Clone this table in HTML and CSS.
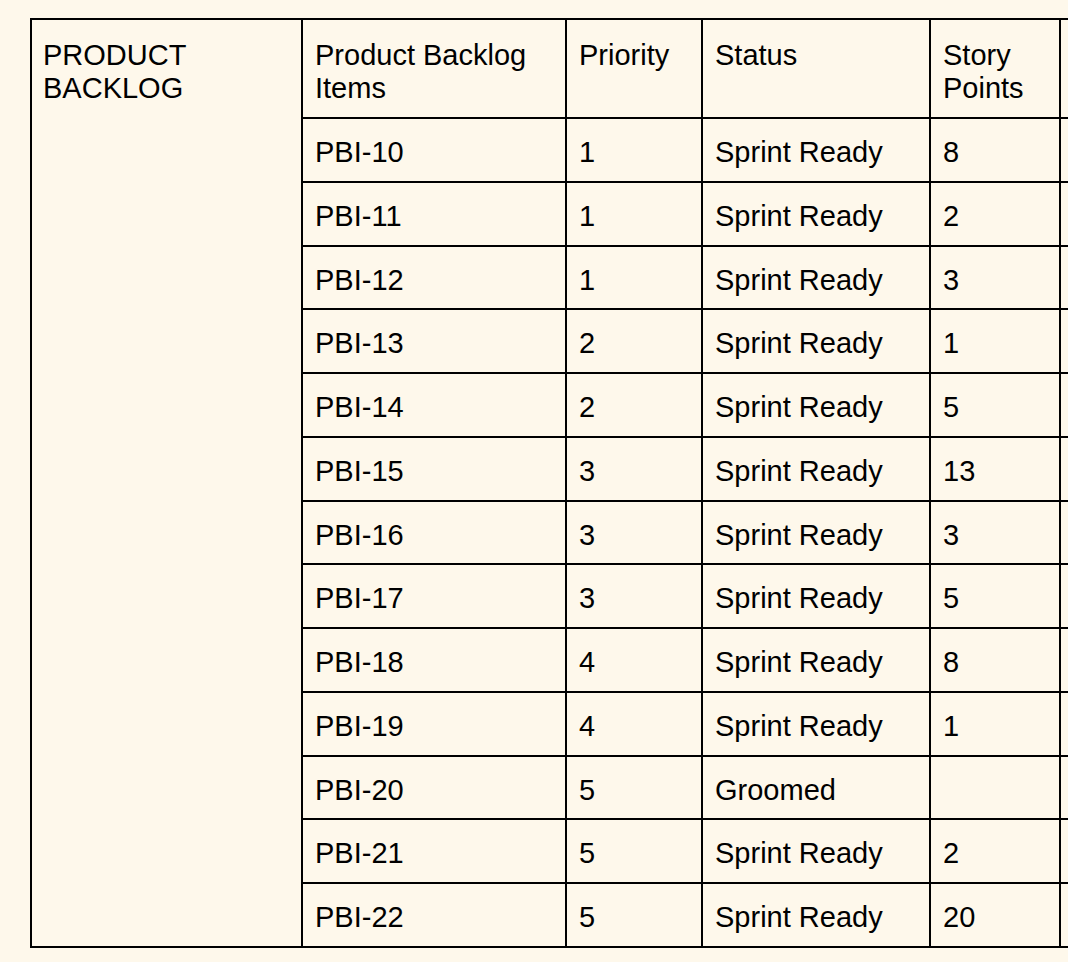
FILE: index.html
```html
<!DOCTYPE html>
<html lang="en">
<head>
<meta charset="utf-8">
<title>Product Backlog</title>
<link rel="stylesheet" href="styles.css">
</head>
<body>
<div class="page">
  <table class="backlog">
    <tbody>
      <tr class="head-row">
        <td class="section c1" rowspan="14">PRODUCT<br>BACKLOG</td>
        <td class="c2">Product Backlog<br>Items</td>
        <td class="c3">Priority</td>
        <td class="c4">Status</td>
        <td class="c5">Story<br>Points</td>
        <td class="c6"></td>
      </tr>
      <tr><td>PBI-10</td><td>1</td><td>Sprint Ready</td><td>8</td><td></td></tr>
      <tr><td>PBI-11</td><td>1</td><td>Sprint Ready</td><td>2</td><td></td></tr>
      <tr><td>PBI-12</td><td>1</td><td>Sprint Ready</td><td>3</td><td></td></tr>
      <tr><td>PBI-13</td><td>2</td><td>Sprint Ready</td><td>1</td><td></td></tr>
      <tr><td>PBI-14</td><td>2</td><td>Sprint Ready</td><td>5</td><td></td></tr>
      <tr><td>PBI-15</td><td>3</td><td>Sprint Ready</td><td>13</td><td></td></tr>
      <tr><td>PBI-16</td><td>3</td><td>Sprint Ready</td><td>3</td><td></td></tr>
      <tr><td>PBI-17</td><td>3</td><td>Sprint Ready</td><td>5</td><td></td></tr>
      <tr><td>PBI-18</td><td>4</td><td>Sprint Ready</td><td>8</td><td></td></tr>
      <tr><td>PBI-19</td><td>4</td><td>Sprint Ready</td><td>1</td><td></td></tr>
      <tr><td>PBI-20</td><td>5</td><td>Groomed</td><td></td><td></td></tr>
      <tr><td>PBI-21</td><td>5</td><td>Sprint Ready</td><td>2</td><td></td></tr>
      <tr><td>PBI-22</td><td>5</td><td>Sprint Ready</td><td>20</td><td></td></tr>
    </tbody>
  </table>
</div>
</body>
</html>
```

FILE: styles.css
```css
html, body {
  margin: 0;
  padding: 0;
  background: #fef8eb;
  overflow: hidden;
}

.page {
  width: 100vw;
  height: 100vh;
  overflow: hidden;
  padding: 18px 0 0 30px;
  box-sizing: border-box;
  font-family: "Liberation Sans", Arial, sans-serif;
  font-size: 29px;
  line-height: 33px;
  color: #000;
}

.backlog {
  border-collapse: separate;
  border-spacing: 0;
  table-layout: fixed;
  width: 1231px;
  border-top: 2px solid #000;
  border-left: 2px solid #000;
}

.backlog td {
  box-sizing: border-box;
  border-right: 2px solid #000;
  border-bottom: 2px solid #000;
  padding: 17px 12px 11.77px 12px;
  vertical-align: top;
  text-align: left;
  white-space: nowrap;
}

.backlog .head-row td {
  padding-top: 19px;
  padding-bottom: 12px;
}

.backlog .section {
  padding-left: 11px;
}

.c1 { width: 271px; }
.c2 { width: 264px; }
.c3 { width: 136px; }
.c4 { width: 228px; }
.c5 { width: 130px; }
.c6 { width: 200px; }
```
